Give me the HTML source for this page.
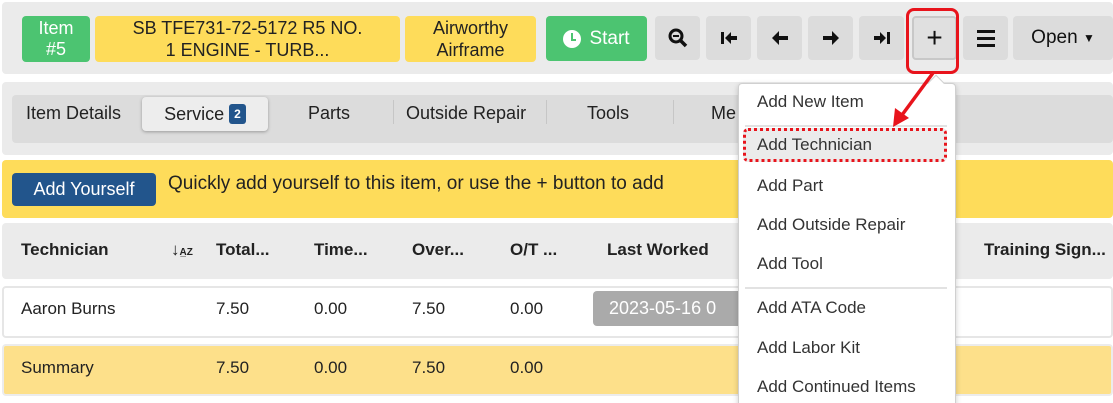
<!DOCTYPE html><html><head><style>
html,body{margin:0;width:1113px;height:403px;overflow:hidden}
body{background:#fff;font-family:"Liberation Sans",sans-serif;position:relative;color:#222}
.a{position:absolute;box-sizing:border-box}
.b{position:absolute;box-sizing:border-box;border-radius:4px;display:flex;align-items:center;justify-content:center;text-align:center}
.btn{background:#dcdcdc;top:16px;height:44px;width:45px;font-size:20px;font-weight:bold;color:#111}
.t{position:absolute;font-size:18px;color:#222;white-space:nowrap;line-height:20px}
.m{position:absolute;left:757px;font-size:17px;color:#333;white-space:nowrap;line-height:20px}
</style></head><body>
<div class="a" style="left:2px;top:2px;width:1111px;height:72px;background:#ebebeb;border-radius:4px"></div>
<div class="b" style="left:22px;top:16px;width:68px;height:46px;background:#4cc471;color:#fff;font-size:18px;line-height:21px">Item<br>#5</div>
<div class="b" style="left:95px;top:16px;width:305px;height:46px;background:#fedc5a;font-size:18px;line-height:22px">SB TFE731-72-5172 R5 NO.<br>1 ENGINE - TURB...</div>
<div class="b" style="left:405px;top:16px;width:131px;height:46px;background:#fedc5a;font-size:18px;line-height:22px">Airworthy<br>Airframe</div>
<div class="b" style="left:546px;top:16px;width:101px;height:45px;background:#4cc471;color:#fff;font-size:19px"><span style="display:inline-block;width:18px;height:18px;border-radius:50%;background:#fff;margin-right:8px;position:relative"><span style="position:absolute;left:8px;top:3px;width:2px;height:7px;background:#4cc471"></span><span style="position:absolute;left:8px;top:9px;width:5px;height:2px;background:#4cc471"></span></span>Start</div>
<div class="b btn" style="left:655px">
<svg width="20" height="20" viewBox="0 0 20 20"><circle cx="8" cy="8" r="6" fill="none" stroke="#111" stroke-width="3"/><line x1="12" y1="12" x2="18" y2="18" stroke="#111" stroke-width="3.5"/><line x1="5" y1="8" x2="11" y2="8" stroke="#111" stroke-width="2"/></svg></div>
<div class="b btn" style="left:706px">
<svg width="20" height="16" viewBox="0 0 20 16"><rect x="2" y="2" width="3" height="12" fill="#111"/><path d="M6 8 L12 2 L12 6 L18 6 L18 10 L12 10 L12 14Z" fill="#111"/></svg></div>
<div class="b btn" style="left:757px">
<svg width="20" height="16" viewBox="0 0 20 16"><path d="M2 8 L9 1 L9 6 L18 6 L18 10 L9 10 L9 15Z" fill="#111"/></svg></div>
<div class="b btn" style="left:808px">
<svg width="20" height="16" viewBox="0 0 20 16"><path d="M18 8 L11 1 L11 6 L2 6 L2 10 L11 10 L11 15Z" fill="#111"/></svg></div>
<div class="b btn" style="left:859px">
<svg width="20" height="16" viewBox="0 0 20 16"><rect x="15" y="2" width="3" height="12" fill="#111"/><path d="M14 8 L8 2 L8 6 L2 6 L2 10 L8 10 L8 14Z" fill="#111"/></svg></div>
<div class="b btn" style="left:912px;background:#e0e0e0;border:2px solid #c8c8c8;font-weight:normal;font-size:28px">+</div>
<div class="a" style="left:906px;top:8px;width:53px;height:66px;border:3px solid #e8141c;border-radius:8px"></div>
<div class="b btn" style="left:963px;flex-direction:column;gap:4px"><span style="width:18px;height:3px;background:#111"></span><span style="width:18px;height:3px;background:#111"></span><span style="width:18px;height:3px;background:#111"></span></div>
<div class="b btn" style="left:1013px;width:100px;font-weight:normal;font-size:19px">Open&nbsp;<span style="font-size:12px">▼</span></div>

<div class="a" style="left:2px;top:82px;width:1111px;height:73px;background:#ebebeb;border-radius:4px"></div>
<div class="a" style="left:12px;top:95px;width:1101px;height:48px;background:#dcdcdc;border-radius:4px"></div>
<div class="t" style="left:26px;top:103px">Item Details</div>
<div class="b" style="left:142px;top:97px;width:126px;height:34px;background:#ededed;box-shadow:0 1px 3px #999;font-size:18px">Service&nbsp;<span style="background:#22558c;color:#fff;font-size:12px;font-weight:bold;padding:3px 5px;border-radius:3px">2</span></div>
<div class="t" style="left:308px;top:103px">Parts</div>
<div class="a" style="left:393px;top:100px;width:1px;height:24px;background:#c6c6c6"></div>
<div class="t" style="left:406px;top:103px">Outside Repair</div>
<div class="a" style="left:546px;top:100px;width:1px;height:24px;background:#c6c6c6"></div>
<div class="t" style="left:587px;top:103px">Tools</div>
<div class="a" style="left:673px;top:100px;width:1px;height:24px;background:#c6c6c6"></div>
<div class="t" style="left:711px;top:103px">Me</div>

<div class="a" style="left:2px;top:160px;width:1111px;height:58px;background:#fedc5a;border-radius:4px"></div>
<div class="b" style="left:12px;top:173px;width:144px;height:33px;background:#22558c;color:#fff;font-size:18px">Add Yourself</div>
<div class="t" style="left:168px;top:174px;font-size:19px">Quickly add yourself to this item, or use the + button to add</div>

<div class="a" style="left:2px;top:223px;width:1111px;height:56px;background:#ebebeb;border-radius:4px"></div>
<div class="t" style="left:21px;top:240px;font-weight:bold;font-size:17px">Technician</div>
<div class="t" style="left:171px;top:240px;font-weight:bold;font-size:17px">↓<span style="font-size:10px">A̲Z</span></div>
<div class="t" style="left:216px;top:240px;font-weight:bold;font-size:17px">Total...</div>
<div class="t" style="left:314px;top:240px;font-weight:bold;font-size:17px">Time...</div>
<div class="t" style="left:412px;top:240px;font-weight:bold;font-size:17px">Over...</div>
<div class="t" style="left:510px;top:240px;font-weight:bold;font-size:17px">O/T ...</div>
<div class="t" style="left:607px;top:240px;font-weight:bold;font-size:17px">Last Worked</div>
<div class="t" style="left:984px;top:240px;font-weight:bold;font-size:17px">Training Sign...</div>

<div class="a" style="left:2px;top:286px;width:1111px;height:52px;background:#fff;border:2px solid #e6e6e6;border-radius:4px"></div>
<div class="t" style="left:21px;top:299px;font-size:17px">Aaron Burns</div>
<div class="t" style="left:216px;top:299px;font-size:17px">7.50</div>
<div class="t" style="left:314px;top:299px;font-size:17px">0.00</div>
<div class="t" style="left:412px;top:299px;font-size:17px">7.50</div>
<div class="t" style="left:510px;top:299px;font-size:17px">0.00</div>
<div class="a" style="left:593px;top:291px;width:150px;height:35px;background:#aaa;border-radius:4px;color:#fff;font-size:18px;padding:7px 0 0 16px;white-space:nowrap;overflow:hidden">2023-05-16 0</div>

<div class="a" style="left:2px;top:344px;width:1111px;height:52px;background:#fde08a;border:2px solid #ececec;border-radius:4px"></div>
<div class="t" style="left:21px;top:358px;font-size:17px">Summary</div>
<div class="t" style="left:216px;top:358px;font-size:17px">7.50</div>
<div class="t" style="left:314px;top:358px;font-size:17px">0.00</div>
<div class="t" style="left:412px;top:358px;font-size:17px">7.50</div>
<div class="t" style="left:510px;top:358px;font-size:17px">0.00</div>

<div class="a" style="left:738px;top:83px;width:218px;height:340px;background:#fff;border:1px solid #d0d0d0;border-radius:4px;box-shadow:0 2px 6px rgba(0,0,0,.2)"></div>
<div class="a" style="left:930px;top:77px;width:12px;height:12px;background:#fff;border-left:1px solid #d0d0d0;border-top:1px solid #d0d0d0;transform:rotate(45deg)"></div>
<div class="m" style="top:92px">Add New Item</div>
<div class="a" style="left:745px;top:125px;width:202px;height:2px;background:#e2e2e2"></div>
<div class="a" style="left:743px;top:128px;width:204px;height:34px;background:#ebebeb;border:3px dotted #e8141c;border-radius:5px"></div>
<div class="m" style="top:135px">Add Technician</div>
<div class="m" style="top:176px">Add Part</div>
<div class="m" style="top:215px">Add Outside Repair</div>
<div class="m" style="top:254px">Add Tool</div>
<div class="a" style="left:745px;top:287px;width:202px;height:2px;background:#e2e2e2"></div>
<div class="m" style="top:298px">Add ATA Code</div>
<div class="m" style="top:338px">Add Labor Kit</div>
<div class="m" style="top:377px">Add Continued Items</div>

<svg class="a" style="left:880px;top:70px" width="60" height="60" viewBox="0 0 60 60"><line x1="53" y1="3" x2="22" y2="45" stroke="#e8141c" stroke-width="3.5"/><path d="M13 57 L15 38 L29 48Z" fill="#e8141c"/></svg>
</body></html>
